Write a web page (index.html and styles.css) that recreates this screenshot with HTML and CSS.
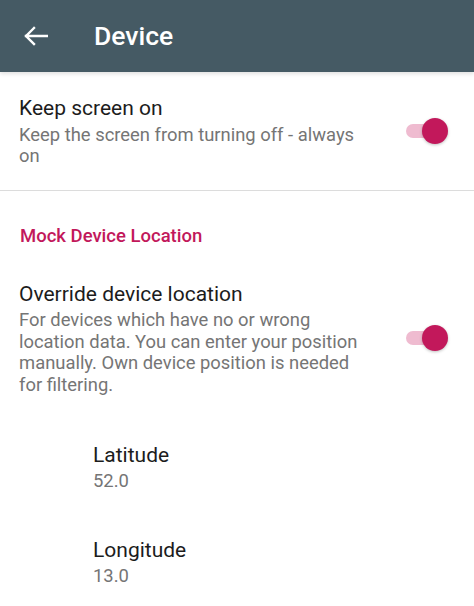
FILE: index.html
```html
<!DOCTYPE html>
<html>
<head>
<meta charset="utf-8">
<link rel="stylesheet" href="styles.css">
</head>
<body>
<header class="appbar">
  <span class="back">
    <svg width="24" height="20" viewBox="0 0 24 20">
      <path d="M2 10H23.5M2 10L10 2M2 10L10 18" fill="none" stroke="#ffffff" stroke-width="2.4" stroke-linecap="square"/>
    </svg>
  </span>
  <h1 class="title">Device</h1>
</header>
<main class="list">
  <section class="pref pref-first">
    <div class="pref-text">
      <div class="pref-title">Keep screen on</div>
      <div class="pref-summary">Keep the screen from turning off - always on</div>
    </div>
    <div class="switch"><span class="track"></span><span class="thumb"></span></div>
  </section>
  <div class="divider"></div>
  <div class="category">Mock Device Location</div>
  <section class="pref pref-override">
    <div class="pref-text">
      <div class="pref-title">Override device location</div>
      <div class="pref-summary">For devices which have no or wrong location data. You can enter your position manually. Own device position is needed for filtering.</div>
    </div>
    <div class="switch"><span class="track"></span><span class="thumb"></span></div>
  </section>
  <section class="pref pref-indent pref-lat">
    <div class="pref-text">
      <div class="pref-title">Latitude</div>
      <div class="pref-summary">52.0</div>
    </div>
  </section>
  <section class="pref pref-indent pref-lon">
    <div class="pref-text">
      <div class="pref-title">Longitude</div>
      <div class="pref-summary">13.0</div>
    </div>
  </section>
</main>
</body>
</html>
```
FILE: styles.css
```css
html, body {
  margin: 0;
  padding: 0;
  background: #ffffff;
  font-family: Roboto, "Noto Sans", "Liberation Sans", sans-serif;
}
.appbar {
  height: 72px;
  background: #455a64;
  display: flex;
  align-items: center;
  box-shadow: 0 2px 4px rgba(0,0,0,0.12);
  position: relative;
  z-index: 1;
}
.back {
  display: flex;
  width: 24px;
  height: 20px;
  margin-left: 24px;
}
.title {
  margin: 0 0 0 46px;
  color: #ffffff;
  font-size: 26.5px;
  font-weight: 500;
  line-height: 72px;
}
.list {
  display: flex;
  flex-direction: column;
}
.pref {
  display: flex;
  align-items: center;
  padding: 0 26px 0 19px;
}
.pref-text {
  flex: 1 1 auto;
  min-width: 0;
}
.pref-title {
  font-size: 21px;
  line-height: 24px;
  color: #1c1c1c;
}
.pref-summary {
  margin-top: 3.5px;
  font-size: 18.4px;
  line-height: 21.4px;
  color: #757575;
}
.pref-first {
  padding-top: 24px;
  padding-bottom: 24px;
}
.divider {
  height: 1px;
  background: #dcdcdc;
}
.category {
  padding: 33.5px 19px 0 20px;
  font-size: 18.5px;
  line-height: 22px;
  font-weight: 500;
  color: #c2185b;
}
.pref-override {
  margin-top: 35px;
}
.pref-indent {
  padding-left: 93px;
}
.pref-lat {
  margin-top: 48px;
}
.pref-lon {
  margin-top: 46px;
}
.switch {
  flex: 0 0 auto;
  position: relative;
  width: 42px;
  height: 26px;
  margin-left: 38px;
}
.track {
  position: absolute;
  left: 0;
  top: 6px;
  width: 38px;
  height: 14px;
  border-radius: 7px;
  background: #efbbd0;
}
.thumb {
  position: absolute;
  right: 0;
  top: 0;
  width: 26px;
  height: 26px;
  border-radius: 50%;
  background: #c2185b;
  box-shadow: 0 1px 3px rgba(0,0,0,0.25);
}
```
